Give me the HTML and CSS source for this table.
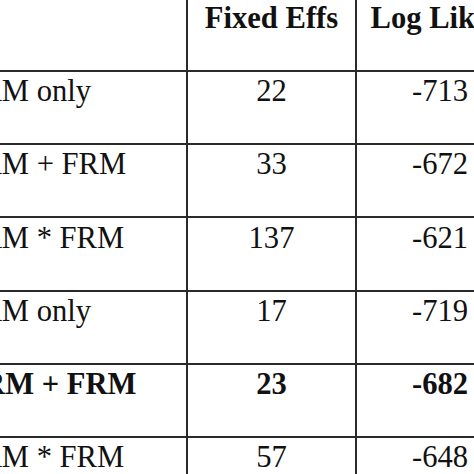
FILE: index.html
```html
<!DOCTYPE html>
<html>
<head>
<meta charset="utf-8">
<link rel="stylesheet" href="styles.css">
</head>
<body>
<div class="table">
  <div class="cell head"></div>
  <div class="cell head num">Fixed Effs</div>
  <div class="cell head left">Log Likelihood</div>

  <div class="cell name">CRM only</div>
  <div class="cell num">22</div>
  <div class="cell num">-713</div>

  <div class="cell name">CRM + FRM</div>
  <div class="cell num">33</div>
  <div class="cell num">-672</div>

  <div class="cell name">CRM * FRM</div>
  <div class="cell num">137</div>
  <div class="cell num">-621</div>

  <div class="cell name">CRM only</div>
  <div class="cell num">17</div>
  <div class="cell num">-719</div>

  <div class="cell name bold">CRM + FRM</div>
  <div class="cell num bold">23</div>
  <div class="cell num bold">-682</div>

  <div class="cell name">CRM * FRM</div>
  <div class="cell num">57</div>
  <div class="cell num">-648</div>
</div>
</body>
</html>
```
FILE: styles.css
```css
html, body {
  margin: 0;
  padding: 0;
  background: #fff;
  overflow: hidden;
  width: 474px;
  height: 474px;
}
.table {
  display: grid;
  grid-template-columns: 241px 169px 168px;
  grid-auto-rows: 73.3px;
  width: max-content;
  margin: -1.5px 0 0 -53px;
  font-family: "Liberation Serif", "Times New Roman", serif;
  font-size: 30.6px;
  line-height: 34px;
  color: #111;
}
.cell {
  box-sizing: border-box;
  border-right: 2px solid #2a2a2a;
  border-bottom: 2px solid #2a2a2a;
  padding: 2.2px 0 0 0;
  white-space: nowrap;
  overflow: hidden;
}
.head {
  font-weight: bold;
}
.name {
  padding-left: 14px;
}
.num {
  text-align: center;
}
.left {
  text-align: left;
  padding-left: 13.5px;
}
.bold {
  font-weight: bold;
}
```
